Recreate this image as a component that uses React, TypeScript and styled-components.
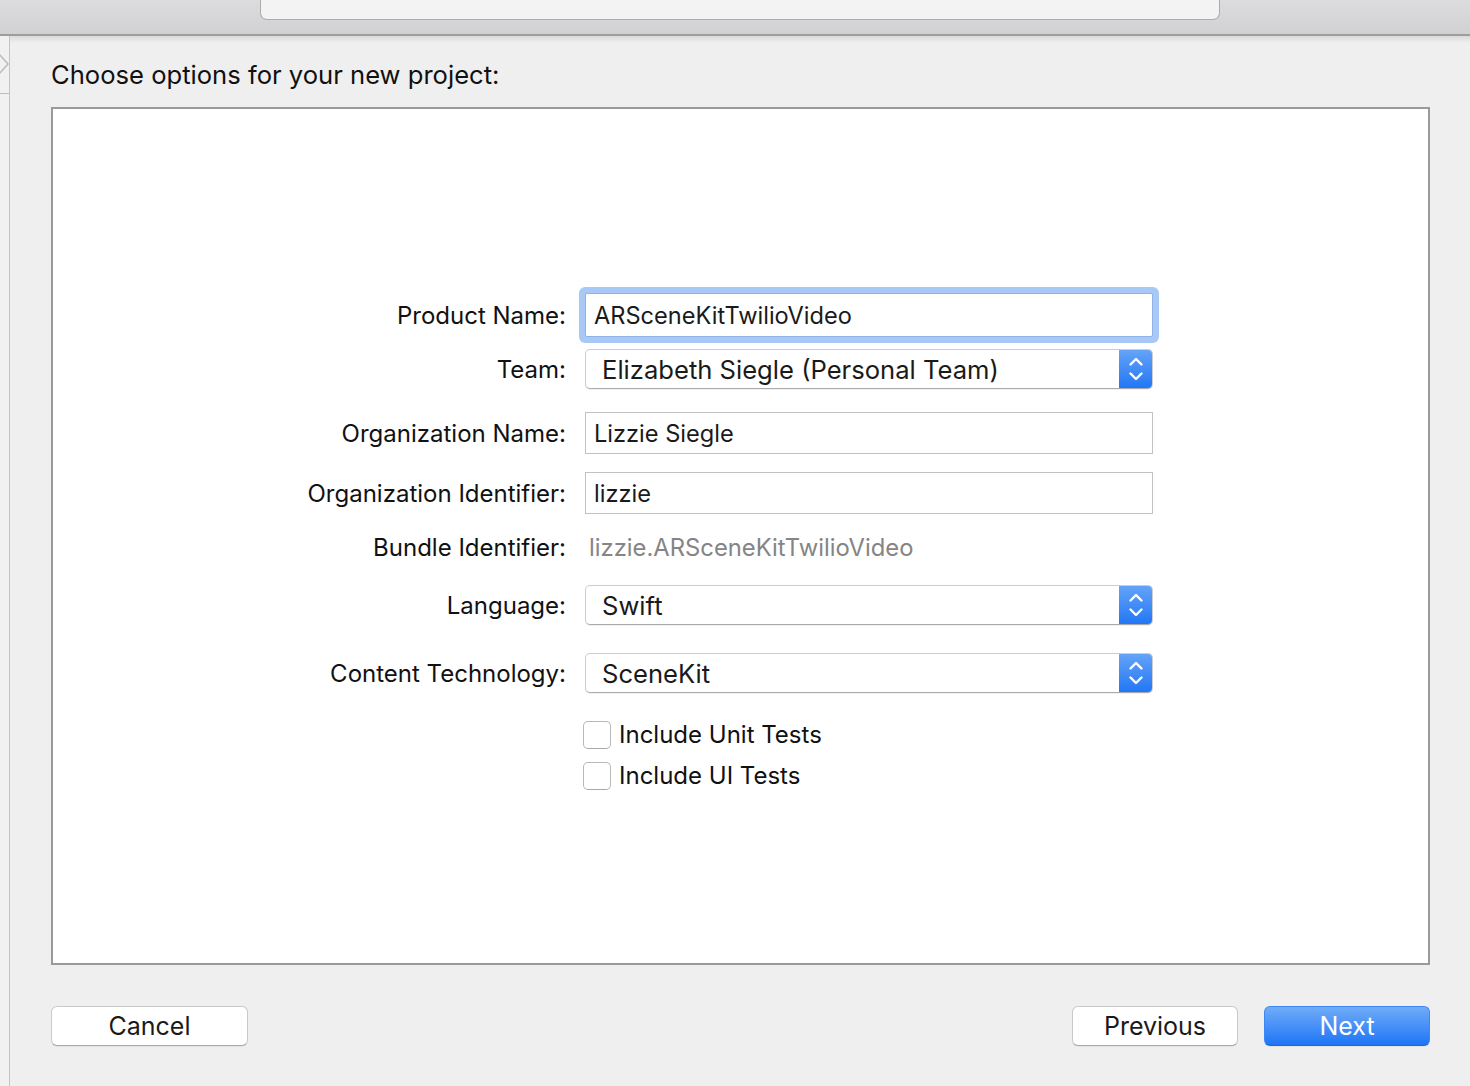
import React from 'react';
import styled, { createGlobalStyle } from 'styled-components';

const GlobalStyle = createGlobalStyle`
  html, body {
    margin: 0;
    padding: 0;
    background: #efefef;
  }
  body {
    font-family: Inter, "Noto Sans", sans-serif;
    color: #1a1a1a;
    -webkit-font-smoothing: antialiased;
  }
`;

const Window = styled.div`
  width: 1470px;
  height: 1086px;
  display: flex;
  flex-direction: column;
  overflow: hidden;
  background: #efefef;
`;

const TitleBar = styled.div`
  height: 34px;
  flex: none;
  background: linear-gradient(#dcdbdd, #d1d0d2);
  border-bottom: 2px solid #9d9d9d;
  padding-left: 260px;
`;

const TitleTab = styled.div`
  width: 958px;
  height: 19px;
  background: #f3f3f3;
  border: 1px solid #ababab;
  border-top: none;
  border-radius: 0 0 7px 7px;
`;

const Body = styled.div`
  flex: 1;
  display: flex;
`;

const SideStrip = styled.div`
  width: 9px;
  flex: none;
  border-right: 1px solid #c4c4c4;
  background: #f1f1f1;
  display: flex;
  flex-direction: column;
`;

const SideChevron = styled.svg`
  margin-top: 16px;
  display: block;
`;

const SideRule = styled.div`
  margin-top: 17px;
  height: 1px;
  background: #bdbdbd;
`;

const Sheet = styled.div`
  flex: 1;
  display: flex;
  flex-direction: column;
  padding: 0 40px 0 41px;
  background: linear-gradient(#dadada 0px, #efefef 7px);
`;

const Heading = styled.h1`
  margin: 24px 0 0;
  height: 47px;
  font-size: 25.6px;
  line-height: 30px;
  font-weight: 400;
  color: #111;
`;

const Panel = styled.div`
  height: 858px;
  background: #fff;
  border: 2px solid #9a9a9a;
  padding-top: 184px;
  box-sizing: border-box;
`;

const Form = styled.div`
  display: grid;
  grid-template-columns: 513px 568px;
  column-gap: 19px;
  align-items: center;
`;

const Label = styled.div<{ $gap: number }>`
  margin-top: ${(p) => p.$gap}px;
  text-align: right;
  font-size: 24px;
  color: #111;
  white-space: nowrap;
`;

const Cell = styled.div<{ $gap: number }>`
  margin-top: ${(p) => p.$gap}px;
  display: flex;
  align-items: center;
`;

const TextField = styled.div<{ $focused?: boolean }>`
  width: 100%;
  height: ${(p) => (p.$focused ? 44 : 42)}px;
  box-sizing: border-box;
  display: flex;
  align-items: center;
  padding-left: 8px;
  font-size: 23.6px;
  color: #1a1a1a;
  background: #fff;
  border: 1px solid ${(p) => (p.$focused ? '#8fb3e6' : '#c2c2c2')};
  box-shadow: ${(p) => (p.$focused ? '0 0 0 6px #a8c8f5' : 'none')};
  border-radius: ${(p) => (p.$focused ? 2 : 0)}px;
`;

const StaticValue = styled.div`
  height: 34px;
  display: flex;
  align-items: center;
  padding-left: 4px;
  font-size: 23.8px;
  color: #858585;
`;

const Popup = styled.div`
  width: 100%;
  height: 40px;
  box-sizing: border-box;
  display: flex;
  align-items: center;
  background: #fff;
  border: 1px solid #cdcdcd;
  border-bottom-color: #ababab;
  border-radius: 5px;
  box-shadow: 0 1px 0 rgba(0, 0, 0, 0.06);
  overflow: hidden;
`;

const PopupText = styled.span`
  flex: 1;
  padding-left: 16px;
  font-size: 25.6px;
  color: #1a1a1a;
`;

const Stepper = styled.span`
  width: 33px;
  height: 100%;
  display: flex;
  align-items: center;
  justify-content: center;
  background: linear-gradient(#64a3f8, #2277f6);
`;

const CheckRow = styled.label`
  display: flex;
  align-items: center;
  gap: 8px;
  font-size: 24px;
  color: #111;
  margin-left: -2px;
`;

const CheckBox = styled.span`
  width: 28px;
  height: 28px;
  box-sizing: border-box;
  background: #fff;
  border: 1px solid #b8b8b8;
  border-bottom-color: #a8a8a8;
  border-radius: 5px;
`;

const Footer = styled.div`
  margin-top: 41px;
  display: flex;
  align-items: center;
  gap: 26px;
`;

const Spacer = styled.div`
  flex: 1;
`;

const Button = styled.button<{ $primary?: boolean; $width: number }>`
  width: ${(p) => p.$width}px;
  height: 40px;
  font-family: Inter, "Noto Sans", sans-serif;
  font-size: 25px;
  border-radius: 6px;
  padding: 0;
  color: ${(p) => (p.$primary ? '#fff' : '#1a1a1a')};
  background: ${(p) => (p.$primary ? 'linear-gradient(#70acf8, #1e75f6)' : '#fff')};
  border: 1px solid ${(p) => (p.$primary ? '#3d86f3' : '#c9c9c9')};
  border-bottom-color: ${(p) => (p.$primary ? '#1967e8' : '#a9a9a9')};
  box-shadow: 0 1px 0 rgba(0, 0, 0, 0.05);
`;

const StepperIcon = () => (
  <svg width="16" height="26" viewBox="0 0 16 26" fill="none">
    <path d="M2.5 8.5 L8 3 L13.5 8.5" stroke="#fff" strokeWidth="2.4" strokeLinecap="round" strokeLinejoin="round" />
    <path d="M2.5 17.5 L8 23 L13.5 17.5" stroke="#fff" strokeWidth="2.4" strokeLinecap="round" strokeLinejoin="round" />
  </svg>
);

const PopupField = ({ value }: { value: string }) => (
  <Popup>
    <PopupText>{value}</PopupText>
    <Stepper>
      <StepperIcon />
    </Stepper>
  </Popup>
);

const App = () => {
  return (
    <Window>
      <GlobalStyle />
      <TitleBar>
        <TitleTab />
      </TitleBar>
      <Body>
        <SideStrip>
          <SideChevron width="9" height="24" viewBox="0 0 9 24">
            <path d="M-1 2 L8 12 L-1 22" stroke="#bdbdbd" strokeWidth="1.6" fill="none" />
          </SideChevron>
          <SideRule />
        </SideStrip>
        <Sheet>
          <Heading>Choose options for your new project:</Heading>
          <Panel>
            <Form>
              <Label $gap={0}>Product Name:</Label>
              <Cell $gap={0}>
                <TextField $focused>ARSceneKitTwilioVideo</TextField>
              </Cell>

              <Label $gap={12}>Team:</Label>
              <Cell $gap={12}>
                <PopupField value="Elizabeth Siegle (Personal Team)" />
              </Cell>

              <Label $gap={23}>Organization Name:</Label>
              <Cell $gap={23}>
                <TextField>Lizzie Siegle</TextField>
              </Cell>

              <Label $gap={18}>Organization Identifier:</Label>
              <Cell $gap={18}>
                <TextField>lizzie</TextField>
              </Cell>

              <Label $gap={16}>Bundle Identifier:</Label>
              <Cell $gap={16}>
                <StaticValue>lizzie.ARSceneKitTwilioVideo</StaticValue>
              </Cell>

              <Label $gap={21}>Language:</Label>
              <Cell $gap={21}>
                <PopupField value="Swift" />
              </Cell>

              <Label $gap={28}>Content Technology:</Label>
              <Cell $gap={28}>
                <PopupField value="SceneKit" />
              </Cell>

              <div />
              <Cell $gap={27}>
                <CheckRow>
                  <CheckBox />
                  Include Unit Tests
                </CheckRow>
              </Cell>

              <div />
              <Cell $gap={12}>
                <CheckRow>
                  <CheckBox />
                  Include UI Tests
                </CheckRow>
              </Cell>
            </Form>
          </Panel>
          <Footer>
            <Button $width={197}>Cancel</Button>
            <Spacer />
            <Button $width={166}>Previous</Button>
            <Button $width={166} $primary>
              Next
            </Button>
          </Footer>
        </Sheet>
      </Body>
    </Window>
  );
};

export default App;
